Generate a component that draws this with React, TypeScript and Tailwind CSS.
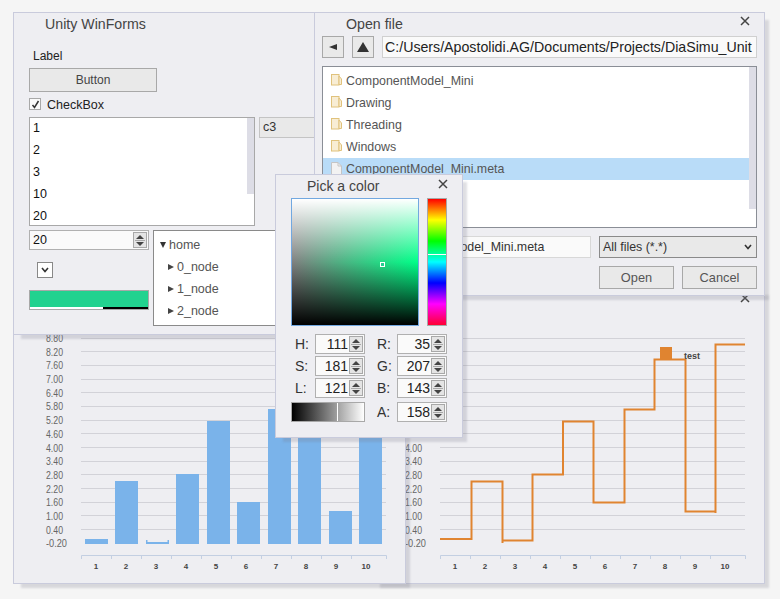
import type { ReactNode } from "react";

const ticks = [8.8, 8.2, 7.6, 7.0, 6.4, 5.8, 5.2, 4.6, 4.0, 3.4, 2.8, 2.2, 1.6, 1.0, 0.4, -0.2];
const barTops = [538, 480, 541, 473, 420, 501, 408, 358, 510, 345];
const barLefts = [72, 102, 133, 163, 194, 224, 255, 285, 316, 346];
const windowShadow = "shadow-[6px_6px_2px_-2px_rgba(120,120,140,0.24)]";

function CloseIcon({ className }: { className: string }) {
  return (
    <svg className={className} width="10" height="10" viewBox="0 0 10 10">
      <path d="M1 1 L9 9 M9 1 L1 9" stroke="#444" strokeWidth="1.5" fill="none" />
    </svg>
  );
}

function ChartFrame({ children, firstLabel }: { children: ReactNode; firstLabel: number }) {
  // coordinates are relative to the window corner, the top is at y=287 on the page
  return (
    <svg width="392" height="296" viewBox="1 1 392 296" className="block">
      {ticks.map((t, i) => {
        const y = 51 + i * 13.69;
        return (
          <g key={t}>
            {i < 15 && <line x1="68" x2="373" y1={Math.floor(y) + 0.5} y2={Math.floor(y) + 0.5} stroke="#d2d2d8" strokeWidth="1" />}
            {i >= firstLabel && (
              <text x="33" y={y + 4} fontSize="10" fill="#666" textLength={t < 0 ? 21 : 17} lengthAdjust="spacingAndGlyphs">
                {t.toFixed(2)}
              </text>
            )}
          </g>
        );
      })}
      <path
        d="M68.5 272 V268.5 H373.5 V272 M98.5 268.5 V272 M128.5 268.5 V272 M158.5 268.5 V272 M188.5 268.5 V272 M218.5 268.5 V272 M248.5 268.5 V272 M278.5 268.5 V272 M308.5 268.5 V272 M338.5 268.5 V272"
        stroke="#c3cfe2"
        fill="none"
      />
      {Array.from({ length: 10 }, (_, i) => (
        <text key={i} x={83 + i * 30} y="282" fontSize="8" fontWeight="bold" fill="#444" textAnchor="middle">
          {i + 1}
        </text>
      ))}
      {children}
    </svg>
  );
}

function ChartWindow({ className, firstLabel, children }: { className: string; firstLabel: number; children: ReactNode }) {
  return (
    <div className={`absolute top-[287px] w-[393px] h-[297px] bg-[#eeeef2] border border-[#c9cbdc] ${windowShadow} ${className}`}>
      <ChartFrame firstLabel={firstLabel}>{children}</ChartFrame>
      <CloseIcon className="absolute right-[14px] top-[5px]" />
    </div>
  );
}

function Spin() {
  return (
    <div className="w-[14px] h-[16px] border border-[#a8a8a8] bg-[#e4e4e4] flex flex-col items-center justify-around py-[1px]">
      <div className="w-0 h-0 border-x-[4px] border-x-transparent border-b-[4px] border-b-[#444]" />
      <div className="w-[10px] h-px bg-[#a8a8a8]" />
      <div className="w-0 h-0 border-x-[4px] border-x-transparent border-t-[4px] border-t-[#444]" />
    </div>
  );
}

function NumberField({ value, className }: { value: number; className: string }) {
  return (
    <div className={`h-[20px] border border-[#b0b0b0] bg-[#fafafa] flex items-center justify-end gap-[1px] pr-[1px] text-[14px] text-[#222] ${className}`}>
      <span className="leading-none">{value}</span>
      <Spin />
    </div>
  );
}

function PickerRow({ left, h, right, r }: { left: string; h: number; right: string; r: number }) {
  return (
    <div className="flex items-center h-[20px] mb-[2px]">
      <span className="w-[24px] pl-[4px] text-[14px] text-[#333]">{left}</span>
      <NumberField value={h} className="w-[50px]" />
      <span className="w-[32px] pl-[12px] text-[14px] text-[#333]">{right}</span>
      <NumberField value={r} className="w-[50px]" />
    </div>
  );
}

function Folder() {
  return (
    <svg width="11" height="12" viewBox="0 0 11 12" className="shrink-0 -translate-y-px">
      <rect x="0.5" y="0.5" width="7.5" height="10.5" fill="#f8edd4" stroke="#e0c27c" />
      <path d="M8 2 L10.5 5 V10.5 H8 Z" fill="#f8edd4" stroke="#e0c27c" />
    </svg>
  );
}

function FileIcon() {
  return (
    <svg width="11" height="14" viewBox="0 0 11 14" className="shrink-0">
      <path d="M0.5 0.5 H7 L10.5 4 V13.5 H0.5 Z" fill="#f2f2f2" stroke="#c4c4c4" />
      <path d="M7 0.5 V4 H10.5" fill="none" stroke="#c4c4c4" />
    </svg>
  );
}

function TreeRow({ label, open, indent }: { label: string; open?: boolean; indent: string }) {
  return (
    <div className={`h-[22px] flex items-center gap-[3px] text-[12.5px] text-[#555] ${indent}`}>
      {open ? (
        <div className="w-0 h-0 border-x-[3px] border-x-transparent border-t-[6px] border-t-[#333]" />
      ) : (
        <div className="w-0 h-0 border-y-[3px] border-y-transparent border-l-[6px] border-l-[#444]" />
      )}
      <span>{label}</span>
    </div>
  );
}

export default function App() {
  return (
    <div className="relative w-[780px] h-[599px] overflow-hidden bg-[#f5f5f5] font-['Liberation_Sans',Arial,sans-serif]">
      {/* right chart */}
      <ChartWindow className="left-[372px]" firstLabel={8}>
        <path
          d="M68 252 H99.5 V194.5 H130.5 V256 M130.5 253.5 H160.5 V187.5 H191 V134.5 H221.5 V215.5 H252.5 V122.5 H282.5 V72.5 H313.5 V224.5 H343.5 V226 M343.5 224.5 V57.5 H373"
          stroke="#e08430"
          strokeWidth="2"
          fill="none"
        />
        <rect x="288" y="60" width="12" height="12" fill="#e08430" />
        <text x="312" y="72" fontSize="9" fontWeight="bold" fill="#444">
          test
        </text>
      </ChartWindow>

      {/* left chart */}
      <ChartWindow className="left-[13px]" firstLabel={0}>
        {barLefts.map((x, i) =>
          i === 2 ? (
            <path key={x} d="M133 253 V257 H156 V253 H154.5 V255 H134.5 V253 Z" fill="#7ab3ea" />
          ) : (
            <rect key={x} x={x} y={barTops[i] - 286} width="23" height={543 - barTops[i]} fill="#7ab3ea" />
          ),
        )}
      </ChartWindow>

      {/* controls window */}
      <div className={`absolute left-[13px] top-[12px] w-[330px] h-[323px] bg-[#eeeef2] border border-[#c9cbdc] ${windowShadow} pl-[15px] text-[#333]`}>
        <div className="h-[23px] pl-[16px] pt-[3px] text-[14.2px] text-[#444] leading-[17px]">Unity WinForms</div>
        <div className="h-[32px] pl-[4px] pt-[13px] text-[12px] leading-[15px] text-[#222]">Label</div>
        <button className="block w-[128px] h-[24px] bg-[#e9e9e9] border border-[#a8a8a8] text-[12px] text-[#444]">Button</button>
        <div className="flex items-center h-[12px] mt-[6px] gap-[6px]">
          <div className="w-[12px] h-[12px] border border-[#a8a8a8] bg-[#fafafa] flex items-center justify-center">
            <svg width="9" height="9" viewBox="0 0 9 9">
              <path d="M1.5 5 L3.5 7.5 L7.5 1" stroke="#333" strokeWidth="1.5" fill="none" />
            </svg>
          </div>
          <span className="text-[12.5px] leading-[14px] translate-y-px text-[#222]">CheckBox</span>
        </div>
        <div className="flex gap-[4px] mt-[7px]">
          <div className="relative w-[226px] h-[109px] bg-white border border-[#a8a8a8] pl-[3px] text-[12.5px] text-[#111]">
            {["1", "2", "3", "10", "20"].map((n) => (
              <div key={n} className="h-[22px] leading-[20px]">
                {n}
              </div>
            ))}
            <div className="absolute right-0 top-0 w-[7px] h-[76px] bg-[#dddde6]" />
          </div>
          <div className="w-[80px] h-[21px] bg-[#e9e9e9] border border-[#c4c4c4] pl-[3px] text-[12.5px] text-[#333] leading-[19px]">c3</div>
        </div>
        <div className="flex gap-[4px] mt-[4px]">
          <div className="w-[120px]">
            <div className="flex items-center h-[20px] border border-[#b0b0b0] bg-[#fafafa] pl-[3px] pr-[1px] text-[12.5px] text-[#111] justify-between">
              <span>20</span>
              <Spin />
            </div>
            <div className="ml-[8px] mt-[12px] w-[16px] h-[16px] border border-[#888] bg-white flex items-center justify-center">
              <svg width="8" height="6" viewBox="0 0 8 6">
                <path d="M1 1 L4 4.5 L7 1" stroke="#333" strokeWidth="1.6" fill="none" />
              </svg>
            </div>
            <div className="mt-[12px] h-[20px] border border-[#a8a8a8] bg-white flex flex-col">
              <div className="h-[16px] bg-[#22d28f]" />
              <div className="h-[2px] flex">
                <div className="w-[73px] bg-white" />
                <div className="flex-1 bg-black" />
              </div>
            </div>
          </div>
          <div className="w-[150px] h-[96px] bg-white border border-[#8a8a8a] pt-[3px]">
            <TreeRow label="home" open indent="pl-[6px]" />
            <TreeRow label="0_node" indent="pl-[14px]" />
            <TreeRow label="1_node" indent="pl-[14px]" />
            <TreeRow label="2_node" indent="pl-[14px]" />
          </div>
        </div>
      </div>

      {/* open file dialog */}
      <div className={`absolute left-[314px] top-[12px] w-[451px] h-[284px] bg-[#eeeef2] border border-[#c9cbdc] ${windowShadow} pl-[7px] pr-[7px] text-[#444]`}>
        <div className="h-[23px] pl-[24px] pt-[3px] text-[14.2px] leading-[17px]">Open file</div>
        <CloseIcon className="absolute right-[14px] top-[3px]" />
        <div className="flex h-[22px] gap-[8px]">
          <div className="w-[22px] h-[22px] bg-[#e9e9e9] border border-[#a8a8a8] flex items-center justify-center">
            <div className="w-0 h-0 border-y-[3px] border-y-transparent border-r-[8px] border-r-[#333]" />
          </div>
          <div className="w-[22px] h-[22px] bg-[#e9e9e9] border border-[#a8a8a8] flex items-center justify-center">
            <div className="w-0 h-0 border-x-[6px] border-x-transparent border-b-[10px] border-b-[#333]" />
          </div>
          <div className="flex-1 min-w-0 bg-[#fafafa] border border-[#d0d0d0] pl-[2px] text-[14.2px] leading-[20px] text-[#222] overflow-hidden whitespace-nowrap">
            C:/Users/Apostolidi.AG/Documents/Projects/DiaSimu_Unit
          </div>
        </div>
        <div className="relative mt-[8px] h-[162px] bg-white border border-[#8a8e96] pt-[3px] text-[12.4px] text-[#555]">
          {["ComponentModel_Mini", "Drawing", "Threading", "Windows"].map((name) => (
            <div key={name} className="h-[22px] flex items-center pl-[8px] gap-[4px]">
              <Folder />
              <span>{name}</span>
            </div>
          ))}
          <div className="h-[22px] flex items-center pl-[8px] gap-[4px] bg-[#b9dcf8] mr-[7px]">
            <FileIcon />
            <span>ComponentModel_Mini.meta</span>
          </div>
          <div className="absolute right-0 top-0 w-[7px] h-[142px] bg-[#dddde6]" />
        </div>
        <div className="flex gap-[8px] mt-[8px] h-[22px]">
          <div className="flex-1 ml-[60px] bg-[#fafafa] border border-[#d8d8d8] text-[12.4px] leading-[20px] pl-[3px] text-[#333] whitespace-nowrap overflow-hidden">
            ComponentModel_Mini.meta
          </div>
          <div className="w-[158px] bg-[#e9e9e9] border border-[#8a8a8a] pl-[3px] pr-[4px] flex items-center justify-between text-[12.4px] text-[#333]">
            <span>All files (*.*)</span>
            <svg width="8" height="6" viewBox="0 0 8 6">
              <path d="M1 1 L4 4.5 L7 1" stroke="#333" strokeWidth="1.6" fill="none" />
            </svg>
          </div>
        </div>
        <div className="flex justify-end gap-[8px] mt-[8px]">
          <button className="w-[75px] h-[23px] bg-[#e9e9e9] border border-[#a8a8a8] text-[12.8px] text-[#555]">Open</button>
          <button className="w-[75px] h-[23px] bg-[#e9e9e9] border border-[#a8a8a8] text-[12.8px] text-[#555]">Cancel</button>
        </div>
      </div>

      {/* color picker */}
      <div className={`absolute left-[275px] top-[174px] w-[188px] h-[264px] bg-[#eeeef2] border border-[#c9cbdc] ${windowShadow} pl-[15px] text-[#444]`}>
        <div className="h-[23px] pl-[16px] pt-[3px] text-[14px] leading-[17px]">Pick a color</div>
        <CloseIcon className="absolute right-[14px] top-[4px]" />
        <div className="flex gap-[8px] h-[128px]">
          <div className="relative w-[128px] h-[128px] border border-[#72a8e0] bg-[linear-gradient(to_bottom,#ffffff,rgba(255,255,255,0)_50%,rgba(0,0,0,0)_50%,#000000),linear-gradient(to_right,#808080,#00ff88)]">
            <div className="absolute left-[88px] top-[63px] w-[5px] h-[5px] border border-white bg-[#23cf8f]" />
          </div>
          <div className="relative w-[20px] h-[128px] border border-[#a8a8a8] bg-[linear-gradient(to_bottom,#ff0000,#ffff00,#00ff00,#00ffff,#0000ff,#ff00ff,#ff0033)]">
            <div className="absolute left-0 right-0 top-[55px] h-px bg-white" />
          </div>
        </div>
        <div className="mt-[8px]">
          <PickerRow left="H:" h={111} right="R:" r={35} />
          <PickerRow left="S:" h={181} right="G:" r={207} />
          <PickerRow left="L:" h={121} right="B:" r={143} />
        </div>
        <div className="flex items-center h-[20px] mt-[4px]">
          <div className="relative w-[74px] h-[20px] border border-[#a8a8a8] bg-[linear-gradient(to_right,#000000,#ffffff)]">
            <div className="absolute top-0 bottom-0 left-[45px] w-px bg-white" />
          </div>
          <span className="w-[32px] pl-[12px] text-[14px] text-[#333]">A:</span>
          <NumberField value={158} className="w-[50px]" />
        </div>
      </div>
    </div>
  );
}
